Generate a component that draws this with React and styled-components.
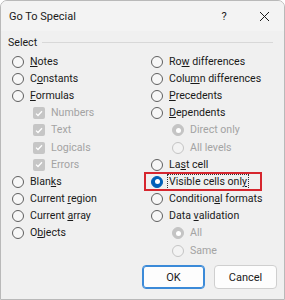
import React from "react";
import styled, { createGlobalStyle } from "styled-components";

const Global = createGlobalStyle`
  html, body { margin: 0; padding: 0; background: #ffffff; }
  body { font-family: Roboto, "Noto Sans", sans-serif; }
`;

const Dialog = styled.div`
  width: 283px;
  height: 298px;
  border: 1px solid #b9b9b9;
  border-radius: 7px 7px 0 0;
  background: #f0f0f0;
  display: flex;
  flex-direction: column;
  overflow: hidden;
  font-size: 10.6px;
  color: #1a1a1a;
`;

const TitleBar = styled.div`
  height: 30px;
  display: flex;
  align-items: center;
  padding: 0 0 0 8px;
  background: #f3f3f3;
`;

const Title = styled.div`
  flex: 1;
  font-size: 11px;
`;

const TitleButton = styled.div`
  width: 40px;
  height: 30px;
  display: flex;
  align-items: center;
  justify-content: center;
  font-size: 11px;
`;

const Group = styled.div`
  padding: 3px 11px 0 7px;
`;

const GroupHead = styled.div`
  display: flex;
  align-items: center;
  gap: 5px;
  height: 16px;
  &::after {
    content: "";
    flex: 1;
    height: 1px;
    background: #d8d8d8;
    margin-top: 1px;
  }
`;

const Columns = styled.div`
  display: grid;
  grid-template-columns: 139px 1fr;
  padding: 3px 0 0 4px;
`;

const Col = styled.div`
  display: flex;
  flex-direction: column;
`;

const Row = styled.div`
  height: 17.2px;
  display: flex;
  align-items: center;
  gap: 6px;
  padding-left: ${(p) => (p.$indent ? "21px" : "0")};
  color: ${(p) => (p.$disabled ? "#a3a3a3" : "#1a1a1a")};
  position: relative;
`;

const Radio = styled.span`
  width: 12px;
  height: 12px;
  border-radius: 50%;
  box-sizing: border-box;
  flex: none;
  border: 1px solid ${(p) => (p.$disabled ? "#c4c4c4" : "#5f5f5f")};
  background: ${(p) =>
    p.$checked ? (p.$disabled ? "#c4c4c4" : "#005fb8") : p.$disabled ? "#f3f3f3" : "#f7f7f7"};
  border-color: ${(p) => (p.$checked ? (p.$disabled ? "#c4c4c4" : "#005fb8") : undefined)};
  display: flex;
  align-items: center;
  justify-content: center;
  &::after {
    content: "";
    display: ${(p) => (p.$checked ? "block" : "none")};
    width: 5px;
    height: 5px;
    border-radius: 50%;
    background: #ffffff;
  }
`;

const Check = styled.span`
  width: 12px;
  height: 12px;
  border-radius: 2px;
  background: #c6c6c6;
  flex: none;
  display: flex;
  align-items: center;
  justify-content: center;
`;

const Label = styled.span`
  line-height: 14px;
  white-space: nowrap;
  outline: ${(p) => (p.$focus ? "1px dotted #333" : "none")};
  outline-offset: 0;
  padding: ${(p) => (p.$focus ? "0 1px" : "0")};
  margin-left: ${(p) => (p.$focus ? "-1px" : "0")};
`;

const Key = styled.span`
  text-decoration: underline;
  text-underline-offset: 1px;
`;

const Highlight = styled.div`
  position: absolute;
  left: -7px;
  top: -1px;
  width: 114px;
  height: 15px;
  border: 2px solid #d6262e;
  pointer-events: none;
`;

const Footer = styled.div`
  margin-top: auto;
  display: flex;
  justify-content: flex-end;
  gap: 9px;
  padding: 0 7px 10px 0;
`;

const Button = styled.button`
  width: 63px;
  height: 24px;
  border-radius: 4px;
  background: #fdfdfd;
  border: 1px solid ${(p) => (p.$default ? "#3b8ad8" : "#cfcfcf")};
  box-shadow: ${(p) => (p.$default ? "inset 0 0 0 1px #3b8ad8" : "none")};
  font: inherit;
  font-size: 11px;
  color: #1a1a1a;
  padding: 0;
`;

const CheckMark = () => (
  <svg width="8" height="7" viewBox="0 0 8 7">
    <path d="M1 3.6 L3 5.5 L7 1.2" fill="none" stroke="#fff" strokeWidth="1.3" />
  </svg>
);

const L = ({ text, k, focus }) => {
  const i = k == null ? -1 : k;
  return (
    <Label $focus={focus}>
      {i < 0 ? (
        text
      ) : (
        <>
          {text.slice(0, i)}
          <Key>{text[i]}</Key>
          {text.slice(i + 1)}
        </>
      )}
    </Label>
  );
};

const left = [
  { t: "Notes", k: 0 },
  { t: "Constants", k: 1 },
  { t: "Formulas", k: 0 },
  { t: "Numbers", c: true },
  { t: "Text", c: true },
  { t: "Logicals", c: true },
  { t: "Errors", c: true },
  { t: "Blanks", k: 4 },
  { t: "Current region", k: 8 },
  { t: "Current array", k: 8 },
  { t: "Objects", k: 1 },
];

const right = [
  { t: "Row differences", k: 2 },
  { t: "Column differences", k: 4 },
  { t: "Precedents", k: 0 },
  { t: "Dependents", k: 0 },
  { t: "Direct only", sub: true, on: true },
  { t: "All levels", sub: true },
  { t: "Last cell", k: 2 },
  { t: "Visible cells only", k: 17, on: true, focus: true, hl: true },
  { t: "Conditional formats", k: 9 },
  { t: "Data validation", k: 5 },
  { t: "All", sub: true, on: true },
  { t: "Same", sub: true },
];

const Item = ({ it }) => {
  if (it.c) {
    return (
      <Row $indent $disabled>
        <Check>
          <CheckMark />
        </Check>
        <L text={it.t} />
      </Row>
    );
  }
  return (
    <Row $indent={it.sub} $disabled={it.sub}>
      <Radio $checked={it.on} $disabled={it.sub} />
      <L text={it.t} k={it.k} focus={it.focus} />
      {it.hl && <Highlight />}
    </Row>
  );
};

export default function App() {
  return (
    <>
      <Global />
      <Dialog>
        <TitleBar>
          <Title>Go To Special</Title>
          <TitleButton>?</TitleButton>
          <TitleButton>
            <svg width="11" height="11" viewBox="0 0 11 11">
              <path d="M1 1 L10 10 M10 1 L1 10" stroke="#1a1a1a" strokeWidth="1" />
            </svg>
          </TitleButton>
        </TitleBar>
        <Group>
          <GroupHead>Select</GroupHead>
          <Columns>
            <Col>
              {left.map((it) => (
                <Item key={it.t} it={it} />
              ))}
            </Col>
            <Col>
              {right.map((it) => (
                <Item key={it.t} it={it} />
              ))}
            </Col>
          </Columns>
        </Group>
        <Footer>
          <Button $default>OK</Button>
          <Button>Cancel</Button>
        </Footer>
      </Dialog>
    </>
  );
}
